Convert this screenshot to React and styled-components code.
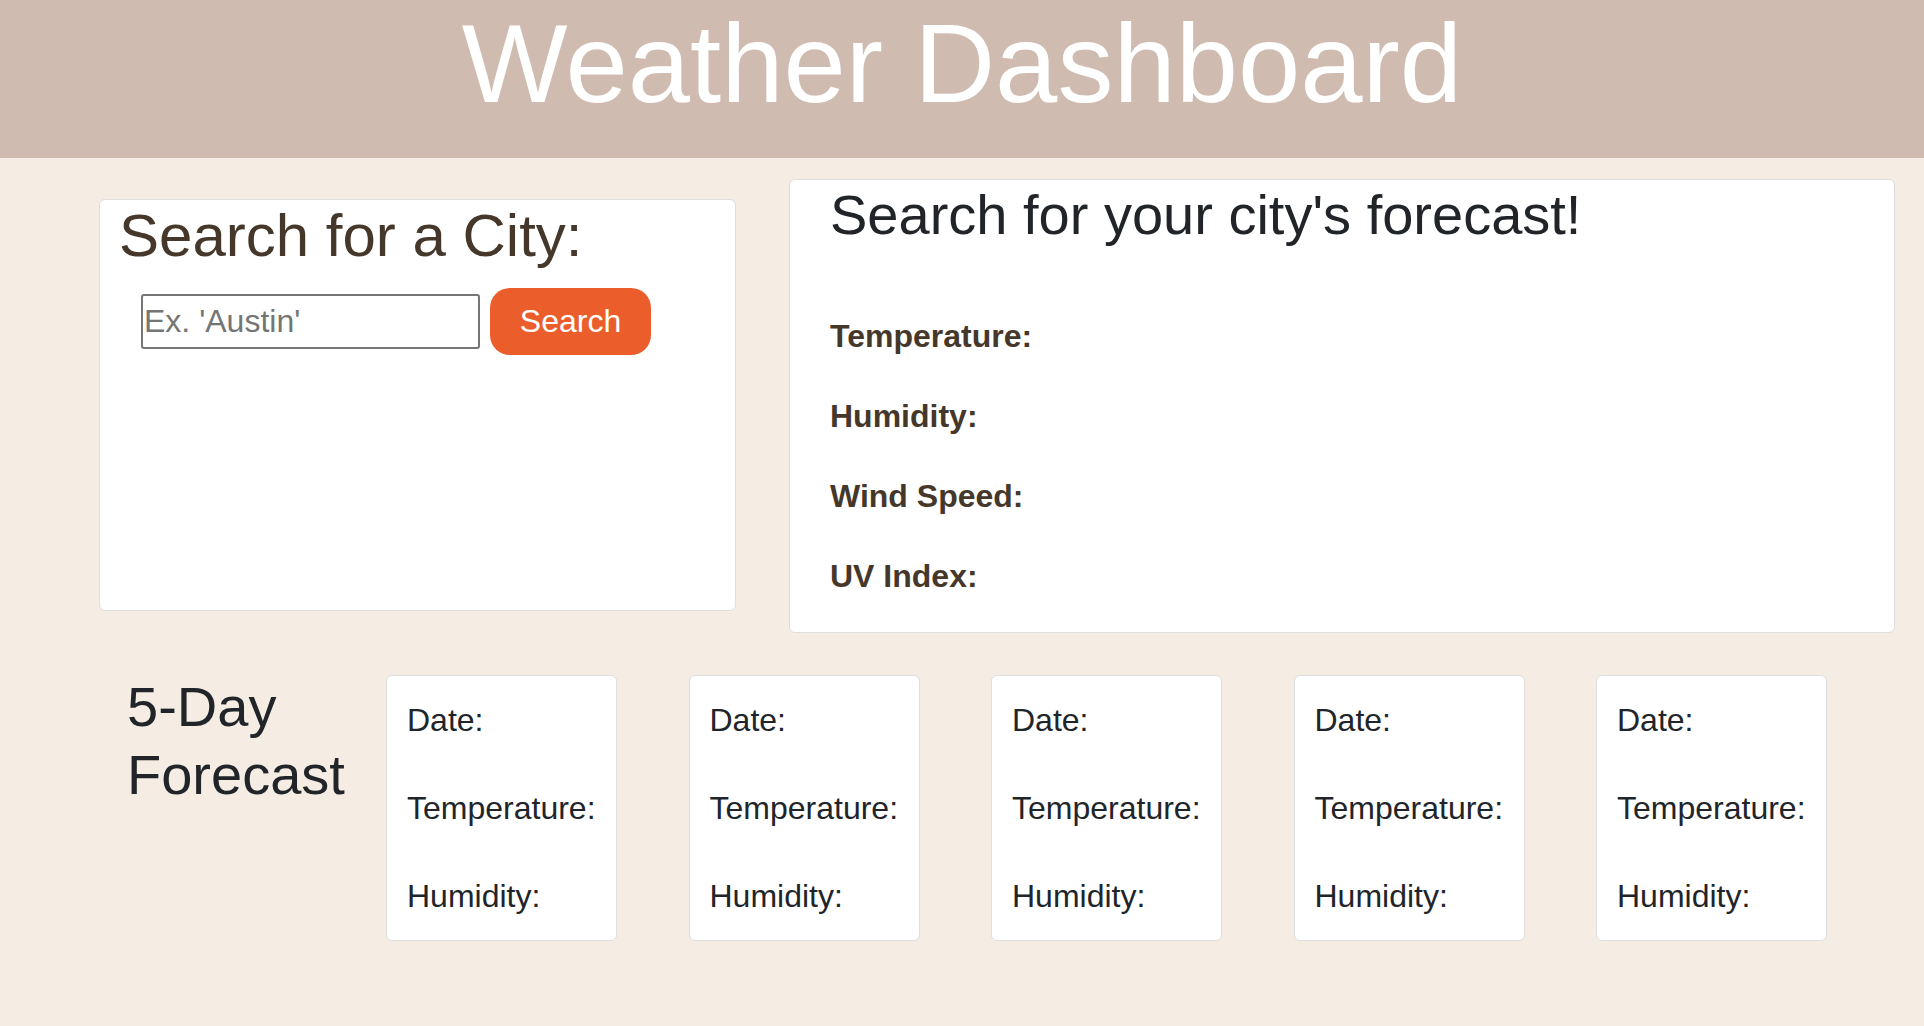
import React from 'react';
import styled, { createGlobalStyle } from 'styled-components';

const GlobalStyle = createGlobalStyle`
  html, body {
    margin: 0;
    padding: 0;
    background: #f5ece3;
    font-family: "Liberation Sans", Arial, Helvetica, sans-serif;
    color: #212529;
  }
  * {
    box-sizing: border-box;
  }
`;

const Page = styled.div`
  min-height: 100vh;
  background: #f5ece3;
`;

const Header = styled.header`
  height: 158px;
  background: #cfbbaf;
  text-align: center;
`;

const Title = styled.h1`
  margin: 0;
  font-size: 112px;
  font-weight: 400;
  line-height: 128px;
  color: #ffffff;
`;

const Main = styled.main`
  display: flex;
  align-items: flex-start;
  gap: 53px;
  padding: 21px 29px 0 99px;
`;

const Card = styled.section`
  background: #ffffff;
  border: 1px solid #dedede;
  border-radius: 6px;
`;

const SearchCard = styled(Card)`
  width: 637px;
  height: 412px;
  margin-top: 20px;
  padding: 0 0 0 19px;
`;

const SearchTitle = styled.h2`
  margin: 0;
  font-size: 60px;
  font-weight: 400;
  line-height: 72px;
  color: #45382b;
`;

const SearchRow = styled.form`
  display: flex;
  align-items: center;
  gap: 10px;
  margin-top: 16px;
  padding-left: 22px;
`;

const CityInput = styled.input`
  width: 339px;
  height: 55px;
  padding: 0 1px;
  border: 2px solid #767676;
  border-radius: 3px;
  font-family: inherit;
  font-size: 32px;
  color: #212529;
  outline: none;

  &::placeholder {
    color: #757575;
  }
`;

const SearchButton = styled.button`
  width: 161px;
  height: 67px;
  border: none;
  border-radius: 20px;
  background: #eb5e2c;
  color: #ffffff;
  font-family: inherit;
  font-size: 32px;
  cursor: pointer;
`;

const CurrentCard = styled(Card)`
  flex: 1;
  height: 454px;
  padding: 2px 40px 0 40px;
`;

const CurrentTitle = styled.h2`
  margin: 0 0 49px;
  font-size: 56px;
  font-weight: 400;
  line-height: 65px;
  color: #212529;
`;

const StatLine = styled.div`
  height: 80px;
  line-height: 80px;
  font-size: 32px;
  font-weight: 700;
  color: #45382b;
`;

const ForecastSection = styled.section`
  display: flex;
  align-items: flex-start;
  margin-top: 42px;
  padding-left: 127px;
`;

const ForecastTitle = styled.h2`
  width: 259px;
  margin: -2px 0 0;
  font-size: 56px;
  font-weight: 400;
  line-height: 68px;
  color: #212529;
`;

const DayList = styled.div`
  display: flex;
  gap: 71.5px;
`;

const DayCard = styled(Card)`
  width: 231px;
  height: 266px;
  padding: 0 0 0 20px;
`;

const DayLine = styled.div`
  height: 88px;
  line-height: 88px;
  font-size: 32px;
  color: #212529;
`;

const days = [1, 2, 3, 4, 5];

const App = () => (
  <Page>
    <GlobalStyle />
    <Header>
      <Title>Weather Dashboard</Title>
    </Header>
    <Main>
      <SearchCard>
        <SearchTitle>Search for a City:</SearchTitle>
        <SearchRow onSubmit={(e) => e.preventDefault()}>
          <CityInput type="text" placeholder="Ex. 'Austin'" />
          <SearchButton type="submit">Search</SearchButton>
        </SearchRow>
      </SearchCard>
      <CurrentCard>
        <CurrentTitle>Search for your city's forecast!</CurrentTitle>
        <StatLine>Temperature:</StatLine>
        <StatLine>Humidity:</StatLine>
        <StatLine>Wind Speed:</StatLine>
        <StatLine>UV Index:</StatLine>
      </CurrentCard>
    </Main>
    <ForecastSection>
      <ForecastTitle>
        5-Day
        <br />
        Forecast
      </ForecastTitle>
      <DayList>
        {days.map((d) => (
          <DayCard key={d}>
            <DayLine>Date:</DayLine>
            <DayLine>Temperature:</DayLine>
            <DayLine>Humidity:</DayLine>
          </DayCard>
        ))}
      </DayList>
    </ForecastSection>
  </Page>
);

export default App;
